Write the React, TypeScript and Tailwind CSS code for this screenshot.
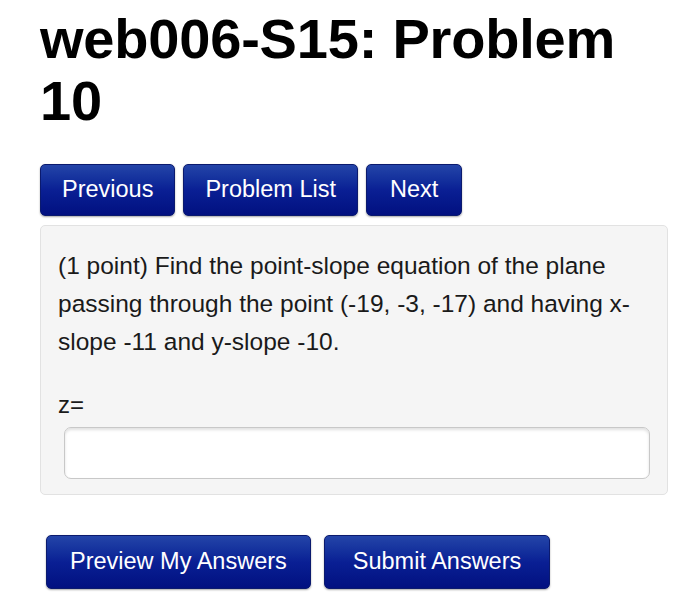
import * as React from "react";

const navButton =
  "rounded-[5px] border border-[#0b1a6e] bg-gradient-to-b from-[#2444a8] via-[#0a1f94] to-[#021080] text-white text-[23.5px] leading-none shadow-[0_1px_2px_rgba(0,0,0,0.35)]";

export default function App() {
  return (
    <div
      className="min-h-[593px] w-[700px] bg-white pl-[40px] pr-[32px] pt-[8px] text-[#111]"
      style={{ fontFamily: '"Liberation Sans", Arial, Helvetica, sans-serif' }}
    >
      <h1 className="text-[56px] font-bold leading-[62px] tracking-[-0.2px] text-black">
        web006-S15: Problem 10
      </h1>

      <div className="mt-[32px] flex gap-[8px]">
        <button className={`${navButton} h-[52px] px-[21px]`}>Previous</button>
        <button className={`${navButton} h-[52px] px-[21px]`}>Problem List</button>
        <button className={`${navButton} h-[52px] px-[23px]`}>Next</button>
      </div>

      <div className="mt-[9px] rounded-[5px] border border-[#e2e2e2] bg-[#f5f5f5] px-[17px] pb-[15px] pt-[21px]">
        <p className="text-[24.5px] leading-[38px] text-[#1a1a1a]">
          (1 point) Find the point-slope equation of the plane passing through the
          point (-19, -3, -17) and having x-slope -11 and y-slope -10.
        </p>
        <div className="mt-[25px] text-[24px] leading-[38px] text-[#1a1a1a]">z=</div>
        <div className="mt-[3px] ml-[6px] h-[52px] rounded-[7px] border border-[#c8c8c8] bg-white shadow-[inset_0_2px_3px_rgba(0,0,0,0.12)]" />
      </div>

      <div className="mt-[40px] flex gap-[13px] pl-[6px]">
        <button className={`${navButton} h-[54px] px-[23px]`}>Preview My Answers</button>
        <button className={`${navButton} h-[54px] px-[28px]`}>Submit Answers</button>
      </div>
    </div>
  );
}
